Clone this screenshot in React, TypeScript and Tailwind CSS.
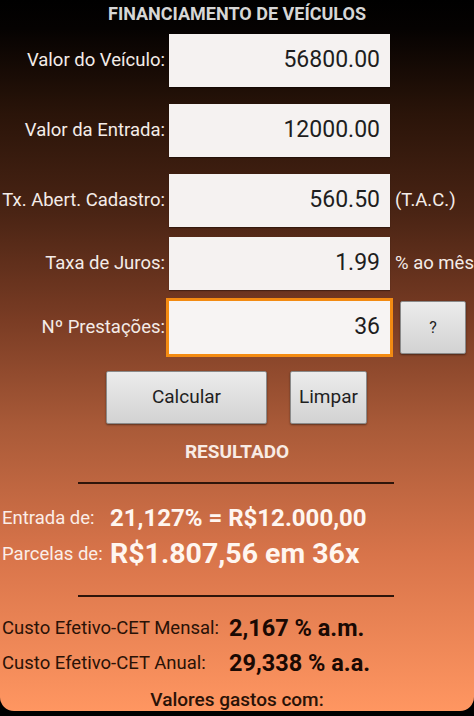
import React from "react"

const font = { fontFamily: "Roboto, 'Noto Sans', Arial, sans-serif" }

function Field({
  label,
  value,
  suffix,
  focused,
}: {
  label: string
  value: string
  suffix?: React.ReactNode
  focused?: boolean
}) {
  return (
    <div className="flex h-[53px] items-center">
      <div className="w-[166px] shrink-0 pr-[1px] text-right text-[18.5px] whitespace-nowrap text-[#f4ece8]">{label}</div>
      <div
        className={
          focused
            ? "ml-[3px] flex h-[53px] w-[221px] shrink-0 items-center justify-end bg-[#f7f4f3] pr-[10px] text-[23px] text-[#1e1e1e] ring-[3px] ring-[#f38b12]"
            : "ml-[3px] flex h-[53px] w-[221px] shrink-0 items-center justify-end bg-[#f5f2f1] pr-[10px] text-[23px] text-[#1e1e1e] shadow-[0_1px_1px_rgba(0,0,0,0.35)]"
        }
      >
        {value}
      </div>
      {suffix}
    </div>
  )
}

function GrayButton({ children, className }: { children: React.ReactNode; className: string }) {
  return (
    <div
      className={
        "flex shrink-0 items-center justify-center rounded-[2px] border border-[#8a8a8a] bg-[linear-gradient(to_bottom,#ececec,#d2d2d2)] text-[#1f1f1f] shadow-[0_1px_2px_rgba(0,0,0,0.45)] " +
        className
      }
    >
      {children}
    </div>
  )
}

export default function App() {
  return (
    <div className="h-[716px] w-[474px] overflow-hidden bg-black" style={font}>
      <div className="h-[711px] overflow-hidden rounded-b-[14px] bg-[linear-gradient(to_bottom,#000000_0%,#050201_4%,#2a1409_16%,#4a2414_30%,#7a3c24_45%,#a95a38_60%,#d8744a_78%,#ff9661_100%)]">
        <div className="pt-[3px] text-center text-[18px] font-bold leading-[22px] text-[#d6d6d6]">
          FINANCIAMENTO DE VEÍCULOS
        </div>

        <div className="mt-[9px]">
          <Field label="Valor do Veículo:" value="56800.00" />
          <div className="h-[17px]" />
          <Field label="Valor da Entrada:" value="12000.00" />
          <div className="h-[17px]" />
          <Field
            label="Tx. Abert. Cadastro:"
            value="560.50"
            suffix={<span className="ml-[5px] text-[18.5px] text-[#f4ece8]">(T.A.C.)</span>}
          />
          <div className="h-[10px]" />
          <Field
            label="Taxa de Juros:"
            value="1.99"
            suffix={<span className="ml-[5px] whitespace-nowrap text-[18.5px] text-[#f4ece8]">% ao mês</span>}
          />
          <div className="h-[11px]" />
          <Field
            label="Nº Prestações:"
            value="36"
            focused
            suffix={
              <GrayButton className="ml-[10px] h-[53px] w-[66px] text-[16px]">?</GrayButton>
            }
          />
        </div>

        <div className="mt-[17px] flex">
          <GrayButton className="ml-[106px] h-[53px] w-[161px] text-[19px]">Calcular</GrayButton>
          <GrayButton className="ml-[23px] h-[53px] w-[77px] text-[19px]">Limpar</GrayButton>
        </div>

        <div className="mt-[16px] text-center text-[19px] font-bold leading-[24px] text-[#f8ebe4]">
          RESULTADO
        </div>

        <div className="ml-[78px] mt-[18px] h-[2px] w-[316px] bg-[#2e150a]" />

        <div className="mt-[18px] flex items-center whitespace-nowrap pl-[2px] leading-[32px]">
          <span className="w-[108px] text-[18.5px] text-[#fbeee8]">Entrada de:</span>
          <span className="text-[24px] font-bold text-[#fff6f0]">21,127% = R$12.000,00</span>
        </div>
        <div className="mt-[2px] flex items-center whitespace-nowrap pl-[2px] leading-[36px]">
          <span className="w-[108px] text-[18.5px] text-[#fbeee8]">Parcelas de:</span>
          <span className="text-[28.5px] font-bold text-[#fff6f0]">R$1.807,56 em 36x</span>
        </div>

        <div className="ml-[78px] mt-[23px] h-[2px] w-[316px] bg-[#2e150a]" />

        <div className="mt-[16px] flex items-center whitespace-nowrap pl-[2px] leading-[30px]">
          <span className="w-[227px] text-[18.5px] text-[#2a1207]">Custo Efetivo-CET Mensal:</span>
          <span className="text-[23.5px] font-bold text-[#1a0903]">2,167 % a.m.</span>
        </div>
        <div className="mt-[5px] flex items-center whitespace-nowrap pl-[2px] leading-[30px]">
          <span className="w-[227px] text-[18.5px] text-[#2a1207]">Custo Efetivo-CET Anual:</span>
          <span className="text-[23.5px] font-bold text-[#1a0903]">29,338 % a.a.</span>
        </div>

        <div className="mt-[9px] text-center text-[19px] font-medium leading-[26px] text-[#2a1207]">
          Valores gastos com:
        </div>
      </div>
    </div>
  )
}
